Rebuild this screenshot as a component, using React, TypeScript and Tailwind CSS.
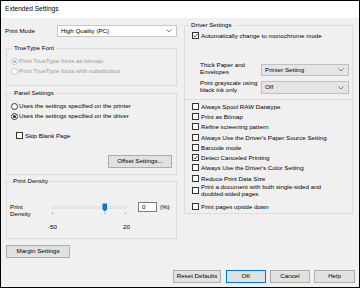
import React from "react";

const Chevron = () => (
  <svg width="6" height="4" viewBox="0 0 6 4" className="shrink-0">
    <path d="M0.5 0.5 L3 3 L5.5 0.5" fill="none" stroke="#606060" strokeWidth="0.8" />
  </svg>
);

const Select = ({ label, w, h, white }: { label: string; w: string; h: string; white?: boolean }) => (
  <div
    className={`${w} ${h} flex items-center justify-between pl-[3px] pr-[4px] border ${
      white ? "bg-white border-[#c8c8c8]" : "bg-[#e5e5e5] border-[#c0c0c0]"
    }`}
  >
    <span>{label}</span>
    <Chevron />
  </div>
);

const Radio = ({ checked, disabled, label }: { checked?: boolean; disabled?: boolean; label: string }) => (
  <div className={`h-[10px] flex items-center gap-[1px] ${disabled ? "text-[#9a9a9a]" : ""}`}>
    <span
      className={`w-[7px] h-[7px] rounded-full border bg-white flex items-center justify-center ${
        disabled ? "border-[#c4c4c4] bg-[#f4f4f4]" : "border-[#333333]"
      }`}
    >
      {checked && (
        <span className={`w-[3px] h-[3px] rounded-full ${disabled ? "bg-[#b0b0b0]" : "bg-[#222222]"}`} />
      )}
    </span>
    <span>{label}</span>
  </div>
);

const Box = ({ checked }: { checked?: boolean }) => (
  <span className="w-[7px] h-[7px] shrink-0 border border-[#333333] bg-white flex items-center justify-center">
    {checked && (
      <svg width="5" height="5" viewBox="0 0 5 5">
        <path d="M0.5 2.6 L1.9 4 L4.6 0.8" fill="none" stroke="#222" strokeWidth="0.8" />
      </svg>
    )}
  </span>
);

const Check = ({ checked, label, h = "h-[10.3px]" }: { checked?: boolean; label: React.ReactNode; h?: string }) => (
  <div className={`${h} flex items-center gap-[2px]`}>
    <Box checked={checked} />
    <span className="leading-[7px]">{label}</span>
  </div>
);

const Button = ({ children, w, primary }: { children: React.ReactNode; w: string; primary?: boolean }) => (
  <div
    className={`${w} h-[13px] flex items-center justify-center bg-[#e1e1e1] border ${
      primary ? "border-[#0078d7]" : "border-[#adadad]"
    }`}
  >
    {children}
  </div>
);

const Slider = () => (
  <svg width="76" height="14" viewBox="0 0 76 14" className="shrink-0">
    <rect x="0.5" y="4.5" width="75" height="2" fill="#e7eaea" stroke="#d6d6d6" strokeWidth="0.5" />
    <rect x="1" y="10.5" width="0.8" height="1.6" fill="#909090" />
    <rect x="53.5" y="10.5" width="0.8" height="1.6" fill="#909090" />
    <rect x="74" y="10.5" width="0.8" height="1.6" fill="#909090" />
    <path d="M51.5 1.5 H56 V7.5 L53.75 9.5 L51.5 7.5 Z" fill="#0078d7" />
  </svg>
);

export default function App() {
  return (
    <div className="w-[360px] h-[288px] border border-black flex flex-col font-['Liberation_Sans',Arial,sans-serif] text-[6.2px] text-black leading-none">
      <div className="h-[17px] bg-white pl-[4px] flex items-center text-[6.6px]">Extended Settings</div>

      <div className="flex-1 bg-[#f0f0f0] flex flex-col pl-[4px] pr-[4px] pt-[3px] pb-[4px]">
        <div className="flex gap-[7px]">
          {/* left column */}
          <div className="w-[172px] mt-[4px] flex flex-col">
            <div className="h-[12px] flex items-center">
              <span className="w-[52px]">Print Mode</span>
              <Select label="High Quality (PC)" w="w-[120px]" h="h-[12px]" white />
            </div>

            <fieldset className="mt-[7px] ml-[1px] border border-[#dcdcdc] pl-[4px] pb-[9px]">
              <legend className="ml-[1px] px-[2px] leading-[8px]">TrueType Font</legend>
              <div className="pt-[4px]">
                <Radio checked disabled label="Print TrueType fonts as bitmap" />
                <Radio disabled label="Print TrueType fonts with substitution" />
              </div>
            </fieldset>

            <fieldset className="mt-[3px] ml-[1px] border border-[#dcdcdc] pl-[4px] pr-[4px] pb-[6px] flex flex-col">
              <legend className="ml-[1px] px-[2px] leading-[8px]">Panel Settings</legend>
              <div className="pt-[4px]">
                <Radio label="Uses the settings specified on the printer" />
                <Radio checked label="Uses the settings specified on the driver" />
              </div>
              <div className="mt-[9px] pl-[5px]">
                <Check label="Skip Blank Page" h="h-[10px]" />
              </div>
              <div className="mt-[15px] self-end">
                <Button w="w-[64px]">Offset Settings...</Button>
              </div>
            </fieldset>

            <fieldset className="mt-[2px] ml-[1px] border border-[#dcdcdc] pb-[8px]">
              <legend className="ml-[4px] px-[2px] leading-[8px]">Print Density</legend>
              <div className="pt-[17px] flex items-start">
                <div className="w-[44px] pl-[3px] pt-[0.5px] leading-[7px]">
                  Print
                  <br />
                  Density
                </div>
                <Slider />
                <div className="ml-[11px] w-[19px] h-[10px] bg-white border border-[#7a7a7a] flex items-center pl-[3px]">
                  0
                </div>
                <span className="ml-[3px] h-[10px] flex items-center">(%)</span>
              </div>
              <div className="mt-[6px] flex leading-[7px]">
                <span className="ml-[41px]">-50</span>
                <span className="ml-[66px]">20</span>
              </div>
            </fieldset>

            <div className="mt-[6px] ml-[1px]">
              <Button w="w-[64px]">Margin Settings</Button>
            </div>
          </div>

          {/* right column */}
          <fieldset className="w-[169px] self-start border border-[#dcdcdc] pb-[2px]">
            <legend className="ml-[4px] px-[2px] leading-[8px]">Driver Settings</legend>
            <div className="pt-[1px] pl-[7px]">
              <Check checked label="Automatically change to monochrome mode" h="h-[10px]" />
            </div>
            <div className="mt-[24px] pl-[15px] flex items-start">
              <div className="w-[61px] -mt-[2px] leading-[6.5px] whitespace-nowrap">
                Thick Paper and
                <br />
                Envelopes
              </div>
              <Select label="Printer Setting" w="w-[88px]" h="h-[12px]" />
            </div>
            <div className="mt-[5px] pl-[15px] flex items-start">
              <div className="w-[61px] -mt-[2px] leading-[7px] whitespace-nowrap">
                Print grayscale using
                <br />
                black ink only
              </div>
              <Select label="Off" w="w-[88px]" h="h-[13px]" />
            </div>
            <div className="mt-[5px] h-[1px] bg-[#dcdcdc]" />
            <div className="pt-[1px] pl-[7px]">
              <Check label="Always Spool RAW Datatype" />
              <Check label="Print as Bitmap" />
              <Check label="Refine screening pattern" />
              <Check label="Always Use the Driver's Paper Source Setting" />
              <Check label="Barcode mode" />
              <Check checked label="Detect Canceled Printing" />
              <Check label="Always Use the Driver's Color Setting" />
              <Check label="Reduce Print Data Size" />
              <Check
                h="h-[14px]"
                label={
                  <>
                    Print a document with both single-sided and
                    <br />
                    doubled-sided pages
                  </>
                }
              />
              <div className="mt-[4px]">
                <Check label="Print pages upside down" h="h-[10px]" />
              </div>
            </div>
          </fieldset>
        </div>

        <div className="mt-auto flex justify-end">
          <Button w="w-[48px]">Reset Defaults</Button>
          <div className="ml-[5px]">
            <Button w="w-[40px]" primary>
              OK
            </Button>
          </div>
          <div className="ml-[4px]">
            <Button w="w-[40px]">Cancel</Button>
          </div>
          <div className="ml-[4px]">
            <Button w="w-[41px]">Help</Button>
          </div>
        </div>
      </div>
    </div>
  );
}
